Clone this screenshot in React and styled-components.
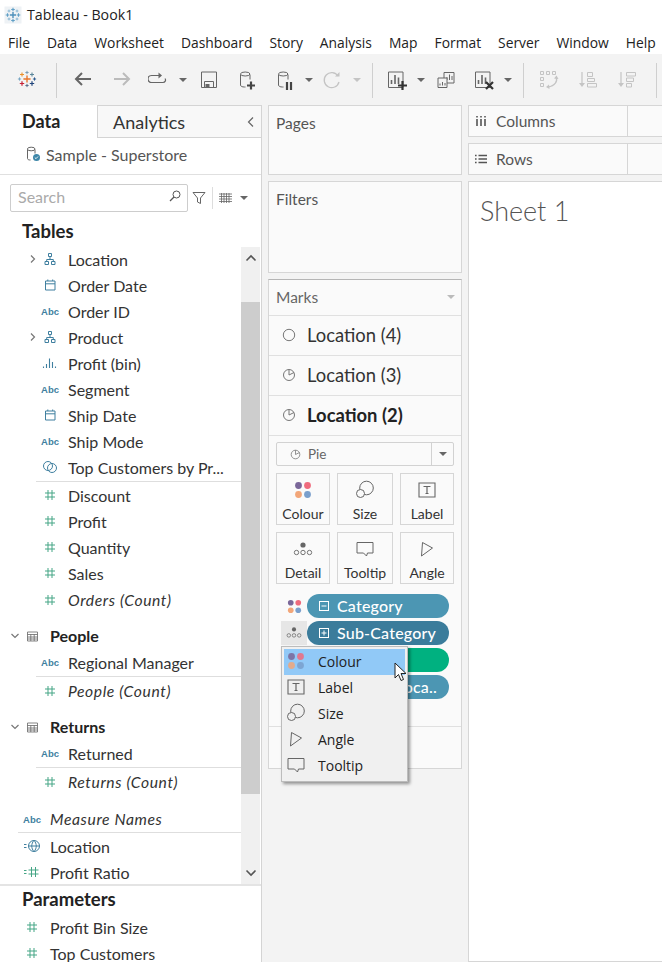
import React from "react";
import styled, { createGlobalStyle } from "styled-components";

const Global = createGlobalStyle`
    html, body {
        margin: 0;
        height: 962px;
        overflow: hidden;
        background: #fff;
    }
    * { box-sizing: border-box; }
`;

const UI = `"Open Sans", "Noto Sans", sans-serif`;
const BOOK = `"Lato", "Open Sans", sans-serif`;
const BLUE = "#3f7f9f";
const GREEN = "#45a585";

function Svg({ w = 20, h = 20, children, ...rest }) {
    return (
        <svg width={w} height={h} viewBox={`0 0 ${w} ${h}`} fill="none" style={{ display: "block", flexShrink: 0 }} {...rest}>
            {children}
        </svg>
    );
}

const Plus = ({ x, y, r, c, t = 1.4 }) => (
    <path d={`M${x - r} ${y}H${x + r}M${x} ${y - r}V${y + r}`} stroke={c} strokeWidth={t} />
);

const TitleIcon = () => (
    <Svg w={18} h={18}>
        <rect x="0.5" y="0.5" width="17" height="17" fill="#eef2f5" />
        <Plus x={9} y={9} r={3} c="#4d90bb" />
        <Plus x={9} y={3.5} r={1.8} c="#5f9fc6" t={1.1} />
        <Plus x={9} y={14.5} r={1.8} c="#5f9fc6" t={1.1} />
        <Plus x={3.5} y={9} r={1.8} c="#5f9fc6" t={1.1} />
        <Plus x={14.5} y={9} r={1.8} c="#5f9fc6" t={1.1} />
        <Plus x={5} y={5} r={1.4} c="#8ab8d4" t={1} />
        <Plus x={13} y={5} r={1.4} c="#8ab8d4" t={1} />
        <Plus x={5} y={13} r={1.4} c="#8ab8d4" t={1} />
        <Plus x={13} y={13} r={1.4} c="#8ab8d4" t={1} />
    </Svg>
);

const Logo = () => (
    <Svg>
        <Plus x={10} y={9} r={3.6} c="#e8762d" />
        <Plus x={10} y={2.5} r={1.6} c="#7b9cb5" t={1} />
        <Plus x={10} y={15.5} r={1.6} c="#5b6f8c" t={1} />
        <Plus x={2.5} y={9} r={1.6} c="#7aa7c4" t={1} />
        <Plus x={17.5} y={9} r={1.6} c="#2e5c8f" t={1} />
        <Plus x={5} y={4.5} r={2} c="#eb912b" t={1.1} />
        <Plus x={15} y={4.5} r={2} c="#5b879b" t={1.1} />
        <Plus x={5} y={13.5} r={2.2} c="#c72035" t={1.2} />
        <Plus x={15} y={13.5} r={2.2} c="#1f447b" t={1.2} />
    </Svg>
);

const ArrowLeft = ({ c = "#666" }) => (
    <Svg><path d="M18 9H3M9 3L3 9l6 6" stroke={c} strokeWidth="2" /></Svg>
);
const ArrowRight = ({ c = "#bbb" }) => (
    <Svg><path d="M2 9h15M11 3l6 6-6 6" stroke={c} strokeWidth="2" /></Svg>
);
const SwapIcon = () => (
    <Svg>
        <path d="M11 5.5H3.5a2.5 2.5 0 0 0 0 7h11.5a2.5 2.5 0 0 0 2-4" stroke="#666" strokeWidth="1.2" />
        <path d="M10.5 2.5l3.5 3-3.5 3z" fill="#666" />
    </Svg>
);
const SaveIcon = () => (
    <Svg>
        <path d="M2.5 2h15v15.5h-15z" stroke="#666" strokeWidth="1" />
        <path d="M5.5 11.5h9v6h-9z" stroke="#666" strokeWidth="1" />
        <rect x="6.5" y="14" width="4" height="3" fill="#666" />
    </Svg>
);
const Cylinder = ({ c = "#666" }) => (
    <g stroke={c} strokeWidth="1">
        <path d="M3.5 4.5v10.5c0 1.4 1.8 2 4 2h1" />
        <path d="M13 4.5v5" />
        <ellipse cx="8.2" cy="4" rx="4.7" ry="2" />
    </g>
);
const SourceAdd = () => (
    <Svg>
        <Cylinder />
        <path d="M10 15.5h8M14 11.5v8" stroke="#444" strokeWidth="2.2" />
    </Svg>
);
const SourcePause = () => (
    <Svg>
        <Cylinder />
        <path d="M12 12v8M16 12v8" stroke="#444" strokeWidth="2.2" />
    </Svg>
);
const Refresh = () => (
    <Svg>
        <path d="M16 6a7.5 7.5 0 1 0 1 6" stroke="#c4c4c4" strokeWidth="1.3" />
        <path d="M13 6.5h4.5V2z" fill="#c4c4c4" />
    </Svg>
);
const Bars = ({ c = "#666" }) => (
    <path d="M4.5 14v-4M8 14V5M11.5 14V7.5" stroke={c} strokeWidth="1.6" />
);
const ChartAdd = () => (
    <Svg>
        <path d="M1.5 2h14.5v15.5H1.5z" stroke="#666" strokeWidth="1" />
        <Bars />
        <path d="M11 15.5h9M15.5 11v9" stroke="#333" strokeWidth="2.2" />
    </Svg>
);
const ChartDup = () => (
    <Svg>
        <path d="M7 2.5h10v10.5H7z" stroke="#666" strokeWidth="1" fill="#f3f3f3" />
        <path d="M10 10V7M12.5 10V4.5M15 10V6" stroke="#666" strokeWidth="1" />
        <path d="M1 8h9v9.5H1z" stroke="#666" strokeWidth="1" fill="#f3f3f3" />
        <path d="M3 15.5v-2M5.5 15.5v-3.5M8 15.5v-2.5" stroke="#666" strokeWidth="1" />
    </Svg>
);
const ChartClear = () => (
    <Svg>
        <path d="M1.5 2h14.5v15.5H1.5z" stroke="#666" strokeWidth="1" />
        <Bars />
        <path d="M12 12l7 7M19 12l-7 7" stroke="#333" strokeWidth="2.2" />
    </Svg>
);
const SwapAxes = () => (
    <Svg>
        <g stroke="#c4c4c4" strokeWidth="1">
            <path d="M1.5 1.5h3v3h-3zM7.5 1.5h3v3h-3zM13.5 1.5h3v3h-3zM1.5 7.5h3v3h-3zM1.5 13.5h3v3h-3z" />
            <path d="M17 7c2 4-1 9-8 10" strokeWidth="1.3" />
        </g>
        <path d="M15 8.5l2.5-3 2 3.5zM10 14.5l-3 2.5 3.5 2z" fill="#c4c4c4" />
    </Svg>
);
const SortAsc = () => (
    <Svg>
        <path d="M4 2v13" stroke="#c4c4c4" strokeWidth="1.2" />
        <path d="M1 13h6l-3 4z" fill="#c4c4c4" />
        <path d="M9.5 2.5h5v4h-5zM9.5 8.5h7v3h-7zM9.5 13.5h9v3.5h-9z" stroke="#c4c4c4" strokeWidth="1" />
    </Svg>
);
const SortDesc = () => (
    <Svg>
        <path d="M4 2v13" stroke="#c4c4c4" strokeWidth="1.2" />
        <path d="M1 13h6l-3 4z" fill="#c4c4c4" />
        <path d="M9.5 2.5h9v3.5h-9zM9.5 8h7v3.5h-7zM9.5 13.5h5v3.5h-5z" stroke="#c4c4c4" strokeWidth="1" />
    </Svg>
);

const Hierarchy = () => (
    <Svg w={14} h={14}>
        <path d="M5.5 1.5h3v3h-3zM2 9.5h3.5v3H2zM8.5 9.5H12v3H8.5zM7 4.5v3M3.7 9.5v-2h6.6v2" stroke={BLUE} strokeWidth="1" />
    </Svg>
);
const CalendarIcon = () => (
    <Svg w={14} h={14}>
        <path d="M2.5 3h9.5v9H2.5zM2.5 5.8h9.5M4.8 1.5V3M9.7 1.5V3" stroke={BLUE} strokeWidth="1" />
    </Svg>
);
const BinIcon = () => (
    <Svg w={16} h={14}>
        <path d="M1.5 12v-1.5M4.5 12V8M7.5 12V2.5M10.5 12V6M13.5 12v-1.5" stroke={BLUE} strokeWidth="1.1" />
    </Svg>
);
const SetIcon = () => (
    <Svg w={16} h={14}>
        <circle cx="6" cy="6" r="4.5" stroke={BLUE} strokeWidth="1" />
        <circle cx="10" cy="8" r="4.5" stroke={BLUE} strokeWidth="1" />
    </Svg>
);
const Hash = ({ c = GREEN }) => (
    <Svg w={12} h={14}>
        <path d="M4 2v10M8 2v10M1 5h10M1 9h10" stroke={c} strokeWidth="1" />
    </Svg>
);
const GlobeIcon = () => (
    <Svg w={16} h={14}>
        <path d="M0 5.5h2.5M0 8.5h2.5" stroke={BLUE} strokeWidth="1" />
        <circle cx="10" cy="7" r="5.5" stroke={BLUE} strokeWidth="1" />
        <path d="M4.5 7h11M10 1.5c-3 3-3 8 0 11M10 1.5c3 3 3 8 0 11" stroke={BLUE} strokeWidth="1" />
    </Svg>
);
const CalcHash = () => (
    <Svg w={16} h={14}>
        <path d="M0 5.5h2.5M0 8.5h2.5" stroke={GREEN} strokeWidth="1" />
        <path d="M7.5 2v10M11.5 2v10M4.5 5h10M4.5 9h10" stroke={GREEN} strokeWidth="1" />
    </Svg>
);
const TableIcon = () => (
    <Svg w={14} h={14}>
        <path d="M2.5 3h10v9h-10zM2.5 5.5h10M2.5 8h10M2.5 10h10M5.8 5.5V12M9.2 5.5V12" stroke="#666" strokeWidth="0.8" />
    </Svg>
);
const ChevronRight = () => (
    <Svg w={8} h={10}><path d="M2 1.5L5.5 5 2 8.5" stroke="#777" strokeWidth="1.2" /></Svg>
);
const ChevronDown = () => (
    <Svg w={10} h={8}><path d="M1.5 2L5 5.5 8.5 2" stroke="#777" strokeWidth="1.2" /></Svg>
);

const Caret = ({ c = "#666" }) => (
    <Svg w={8} h={6}><path d="M0 1h8L4 5z" fill={c} /></Svg>
);

const PieMark = ({ size = 14, c = "#777" }) => (
    <Svg w={14} h={14} style={{ width: size, height: size, display: "block" }}>
        <circle cx="7" cy="7" r="5.5" stroke={c} strokeWidth="1" />
        <path d="M7 7V1.5M7 7L12 4.5" stroke={c} strokeWidth="1" />
    </Svg>
);
const CircleMark = () => (
    <Svg w={14} h={14}><circle cx="7" cy="7" r="5.7" stroke="#777" strokeWidth="1" /></Svg>
);

const ColourDots = ({ size = 18, muted }) => (
    <Svg w={18} h={18} style={{ width: size, height: size, display: "block" }}>
        <g opacity={muted ? 0.85 : 1}>
            <circle cx="4.5" cy="4.5" r="3.4" fill="#7a6799" />
            <circle cx="13.5" cy="4.5" r="3.4" fill="#ef6b7d" />
            <circle cx="4.5" cy="13.5" r="3.4" fill="#f2a679" />
            <circle cx="13.5" cy="13.5" r="3.4" fill="#7a9fcc" />
        </g>
    </Svg>
);
const SizeIcon = ({ bg = "#fafafa" }) => (
    <Svg>
        <circle cx="11.5" cy="8" r="6.8" stroke="#666" strokeWidth="1" />
        <circle cx="5.5" cy="13.5" r="4" fill={bg} stroke="#666" strokeWidth="1" />
    </Svg>
);
const LabelIcon = () => (
    <Svg w={18} h={16}>
        <path d="M1 1h16v14H1z" stroke="#666" strokeWidth="1.1" />
        <path d="M5.5 4.5h7M9 4.5v7M7.5 11.5h3" stroke="#666" strokeWidth="1.2" />
    </Svg>
);
const DetailIcon = ({ size = 20 }) => (
    <Svg w={20} h={14} style={{ width: size, height: size * 0.7, display: "block" }}>
        <circle cx="10" cy="3" r="2.6" fill="#666" />
        <circle cx="3.5" cy="10.5" r="2.2" stroke="#666" strokeWidth="0.9" />
        <circle cx="10" cy="10.5" r="2.2" stroke="#666" strokeWidth="0.9" />
        <circle cx="16.5" cy="10.5" r="2.2" stroke="#666" strokeWidth="0.9" />
    </Svg>
);
const TooltipIcon = () => (
    <Svg w={18} h={16}>
        <path d="M1 1.5h16v10.5h-5.5l-1 3-3-3H1z" stroke="#666" strokeWidth="1" strokeLinejoin="round" />
    </Svg>
);
const AngleIcon = () => (
    <Svg w={14} h={16}>
        <path d="M2.5 1.5L12.5 7 1.5 15z" stroke="#666" strokeWidth="1" strokeLinejoin="round" />
    </Svg>
);

const Page = styled.div`
    width: 662px;
    height: 962px;
    overflow: hidden;
    display: flex;
    flex-direction: column;
    font-family: ${UI};
    background: #f3f3f3;
`;

const TitleBar = styled.div`
    height: 33px;
    background: #fff;
    display: flex;
    align-items: center;
    gap: 5px;
    padding: 0 0 4px 4px;
    font-size: 14.2px;
    color: #222;
`;

const MenuBar = styled.div`
    height: 21px;
    background: #fff;
    display: flex;
    align-items: center;
    gap: 17px;
    padding: 0 0 2px 8px;
    font-size: 13.85px;
    color: #222;
    white-space: nowrap;
`;

const Toolbar = styled.div`
    height: 51px;
    flex-shrink: 0;
    display: flex;
    align-items: center;
    padding-left: 17px;
`;

const Tool = styled.div`
    margin-left: ${(p) => p.$gap || 0}px;
    flex-shrink: 0;
    display: flex;
    align-items: center;
    justify-content: center;
`;

const ToolSep = styled.div`
    margin-left: ${(p) => p.$gap}px;
    margin-top: 1px;
    width: 1px;
    height: 35px;
    flex-shrink: 0;
    background: #cfcfcf;
`;

const Body = styled.div`
    flex: 1;
    display: flex;
    min-height: 0;
`;

const DataPane = styled.aside`
    width: 262px;
    flex-shrink: 0;
    height: 100%;
    background: #fff;
    border-right: 1px solid #d4d4d4;
    display: flex;
    flex-direction: column;
    font-family: ${BOOK};
    color: #333;
`;

const Tabs = styled.div`
    height: 33px;
    flex-shrink: 0;
    display: flex;
`;

const DataTab = styled.div`
    width: 97px;
    padding: 5px 0 0 22px;
    font-size: 18px;
    font-weight: 700;
    color: #222;
`;

const AnalyticsTab = styled.div`
    flex: 1;
    display: flex;
    align-items: center;
    justify-content: space-between;
    padding: 0 5px 0 15px;
    font-size: 18px;
    color: #333;
    background: #f8f8f8;
    border: 1px solid #d4d4d4;
    border-width: 1px 0 1px 1px;
`;

const SourceRow = styled.div`
    height: 37px;
    flex-shrink: 0;
    display: flex;
    align-items: center;
    gap: 5px;
    padding: 0 0 4px 26px;
    font-size: 16px;
    color: #555;
    border-bottom: 1px solid #e0e0e0;
`;

const SearchRow = styled.div`
    margin-top: 9px;
    height: 28px;
    flex-shrink: 0;
    display: flex;
    align-items: center;
    padding-left: 10px;
`;

const SearchBox = styled.div`
    width: 178px;
    height: 28px;
    display: flex;
    align-items: center;
    justify-content: space-between;
    padding: 0 6px 4px 7px;
    border: 1px solid #cdcdcd;
    border-radius: 2px;
    font-size: 16px;
    color: #aaa;
`;

const SearchTools = styled.div`
    display: flex;
    align-items: center;
    padding-left: 4px;
`;

const VSep = styled.div`
    width: 1px;
    height: 22px;
    margin: 0 6px;
    background: #ddd;
`;

const Heading = styled.div`
    height: ${(p) => p.$height}px;
    flex-shrink: 0;
    padding-left: 22px;
    padding-top: ${(p) => p.$top || 0}px;
    padding-bottom: ${(p) => p.$bottom || 0}px;
    display: flex;
    align-items: center;
    font-size: 18.5px;
    font-weight: 700;
    color: #222;
`;

const ListArea = styled.div`
    height: 637px;
    flex-shrink: 0;
    display: flex;
    padding-right: 1px;
    overflow: hidden;
`;

const FieldList = styled.div`
    width: 241px;
    flex-shrink: 0;
`;

const Row = styled.div`
    height: ${(p) => p.$height || 26}px;
    margin-top: ${(p) => p.$top || 0}px;
    padding-left: ${(p) => (p.$deep ? 27 : 9)}px;
    padding-bottom: ${(p) => (p.$italic ? 0 : 2)}px;
    display: flex;
    align-items: center;
    font-size: ${(p) => (p.$italic ? 15.7 : 16)}px;
    font-style: ${(p) => (p.$italic ? "italic" : "normal")};
    letter-spacing: ${(p) => (p.$italic ? "0.6px" : "normal")};
    font-weight: ${(p) => (p.$bold ? 700 : 400)};
    white-space: nowrap;
    color: ${(p) => (p.$bold ? "#222" : "#333")};
`;

const ChevSlot = styled.div`
    width: 12px;
    flex-shrink: 0;
    display: flex;
    justify-content: center;
`;

const IconSlot = styled.div`
    width: 22px;
    margin-right: 7px;
    flex-shrink: 0;
    display: flex;
    align-items: center;
    justify-content: center;
`;

const AbcIcon = styled.span`
    font-family: "Liberation Sans", sans-serif;
    font-size: 9.5px;
    font-style: normal;
    font-weight: 700;
    letter-spacing: 0;
    color: ${BLUE};
`;

const Rule = styled.div`
    height: 1px;
    margin: 0 0 1px ${(p) => (p.$deep ? 36 : 18)}px;
    background: #dedede;
`;

const ScrollBar = styled.div`
    width: 19px;
    flex-shrink: 0;
    background: #f0f0f0;
    display: flex;
    flex-direction: column;
    align-items: center;
`;

const ScrollButton = styled.div`
    height: 55px;
    padding-top: 7px;
    flex-shrink: 0;
`;

const ScrollThumb = styled.div`
    width: 100%;
    height: 492px;
    flex-shrink: 0;
    background: #cdcdcd;
`;

const ScrollBottom = styled.div`
    flex: 1;
    display: flex;
    align-items: flex-end;
    padding-bottom: 7px;
`;

const ParamPane = styled.div`
    flex: 1;
    border-top: 2px solid #e4e4e4;
    overflow: hidden;
`;

const Middle = styled.div`
    width: 194px;
    margin-left: 6px;
    flex-shrink: 0;
    display: flex;
    flex-direction: column;
    font-family: ${BOOK};
`;

const Shelf = styled.section`
    height: ${(p) => p.$height}px;
    flex-shrink: 0;
    margin-bottom: 6px;
    padding: 8px 7px;
    background: #fafafa;
    border: 1px solid #d6d6d6;
    font-size: 15.5px;
    color: #555;
`;

const MarksCard = styled.section`
    height: 490px;
    flex-shrink: 0;
    background: #fafafa;
    border: 1px solid #d6d6d6;
    border-top-color: #b5b5b5;
`;

const MarksHead = styled.div`
    height: 36px;
    display: flex;
    align-items: center;
    justify-content: space-between;
    padding: 0 6px 2px 7px;
    font-size: 15.5px;
    color: #666;
    border-bottom: 1px solid #e0e0e0;
`;

const LayerRow = styled.div`
    height: 40px;
    display: flex;
    align-items: center;
    gap: 11px;
    padding: 0 0 2px 13px;
    font-size: 18.4px;
    font-weight: ${(p) => (p.$bold ? 700 : 400)};
    color: ${(p) => (p.$bold ? "#222" : "#333")};
    border-bottom: 1px solid #e0e0e0;
`;

const MarksBody = styled.div`
    padding: 6px 7px 0;
    height: 291px;
    border-bottom: 1px solid #e0e0e0;
`;

const MarkSelect = styled.div`
    height: 24px;
    display: flex;
    align-items: center;
    border: 1px solid #d2d2d2;
    border-radius: 2px;
    padding-left: 13px;
    gap: 7px;
    font-size: 13.5px;
    color: #666;
`;

const SelectArrow = styled.div`
    margin-left: auto;
    width: 22px;
    height: 100%;
    display: flex;
    align-items: center;
    justify-content: center;
    border-left: 1px solid #d2d2d2;
`;

const MarkGrid = styled.div`
    margin-top: 7px;
    display: grid;
    grid-template-columns: 54px 56px 54px;
    grid-auto-rows: 52px;
    gap: 7px;
`;

const MarkButton = styled.div`
    border: 1px solid #d6d6d6;
    display: flex;
    flex-direction: column;
    align-items: center;
    font-size: 14px;
    color: #333;
`;

const MarkIcon = styled.div`
    height: 31px;
    display: flex;
    align-items: center;
    justify-content: center;
`;

const PillList = styled.div`
    position: relative;
    margin: 10px 5px 0;
    display: flex;
    flex-direction: column;
    gap: 3px;
`;

const PillRow = styled.div`
    display: flex;
    align-items: center;
    height: 24px;
`;

const PillIcon = styled.div`
    width: 26px;
    height: 24px;
    flex-shrink: 0;
    display: flex;
    align-items: center;
    justify-content: center;
    background: ${(p) => (p.$active ? "#e6e6e6" : "transparent")};
`;

const Pill = styled.div`
    flex: 1;
    height: 24px;
    border-radius: 12px;
    display: flex;
    align-items: center;
    justify-content: ${(p) => (p.$end ? "flex-end" : "flex-start")};
    gap: 7px;
    padding: 0 12px 1px;
    font-size: 16px;
    font-weight: 500;
    letter-spacing: 0.2px;
    color: #fff;
    white-space: nowrap;
    overflow: hidden;
    background: ${(p) => p.$bg};
`;

const PlusBox = styled.span`
    width: 10px;
    height: 10px;
    flex-shrink: 0;
    margin-right: 1px;
    display: flex;
    border: 1px solid #fff;
`;

const ContextMenu = styled.div`
    position: absolute;
    left: 0;
    top: 52px;
    width: 127px;
    padding: 2px;
    background: #f0f0f0;
    border: 1px solid #bcbcbc;
    box-shadow: 2px 2px 3px rgba(0, 0, 0, 0.4);
    font-family: ${UI};
`;

const MenuItem = styled.div`
    height: 26px;
    display: flex;
    align-items: center;
    padding: 0 0 2px 3px;
    font-size: 14px;
    color: #222;
    background: ${(p) => (p.$active ? "#91c9f7" : "transparent")};
`;

const MenuIcon = styled.div`
    width: 18px;
    margin-right: 13px;
    flex-shrink: 0;
    display: flex;
    justify-content: center;
`;

const Cursor = styled.svg`
    position: absolute;
    left: 112px;
    top: 15px;
`;

const Canvas = styled.main`
    flex: 1;
    min-width: 0;
    margin-left: 6px;
    display: flex;
    flex-direction: column;
    font-family: ${BOOK};
`;

const RowShelf = styled.div`
    height: 32px;
    margin-bottom: 6px;
    flex-shrink: 0;
    display: flex;
    background: #fafafa;
    border: 1px solid #d6d6d6;
    border-right: none;
`;

const ShelfLabel = styled.div`
    width: 159px;
    display: flex;
    align-items: center;
    gap: 9px;
    padding-left: 6px;
    font-size: 15.5px;
    color: #555;
    border-right: 1px solid #d6d6d6;
`;

const Sheet = styled.div`
    flex: 1;
    background: #fff;
    border: 1px solid #d6d6d6;
    border-right: none;
    padding: 12px 11px;
    font-size: 27px;
    font-weight: 300;
    color: #555;
`;

const tableFields = [
    { icon: <Hierarchy />, name: "Location", expand: true },
    { icon: <CalendarIcon />, name: "Order Date" },
    { icon: <AbcIcon>Abc</AbcIcon>, name: "Order ID" },
    { icon: <Hierarchy />, name: "Product", expand: true },
    { icon: <BinIcon />, name: "Profit (bin)" },
    { icon: <AbcIcon>Abc</AbcIcon>, name: "Segment" },
    { icon: <CalendarIcon />, name: "Ship Date" },
    { icon: <AbcIcon>Abc</AbcIcon>, name: "Ship Mode" },
    { icon: <SetIcon />, name: "Top Customers by Pr..." },
];

const tableMeasures = ["Discount", "Profit", "Quantity", "Sales"];

function Field({ icon, name, expand, deep = true, italic }) {
    return (
        <Row $deep={deep} $italic={italic}>
            <ChevSlot>{expand && <ChevronRight />}</ChevSlot>
            <IconSlot>{icon}</IconSlot>
            {name}
        </Row>
    );
}

function TableHead({ name }) {
    return (
        <Row $bold $height={27} $top={10}>
            <ChevSlot><ChevronDown /></ChevSlot>
            <IconSlot><TableIcon /></IconSlot>
            {name}
        </Row>
    );
}

const menuItems = [
    { icon: <ColourDots muted />, name: "Colour", active: true },
    { icon: <LabelIcon />, name: "Label" },
    { icon: <SizeIcon bg="#f0f0f0" />, name: "Size" },
    { icon: <AngleIcon />, name: "Angle" },
    { icon: <TooltipIcon />, name: "Tooltip" },
];

const markButtons = [
    { icon: <ColourDots />, name: "Colour" },
    { icon: <SizeIcon />, name: "Size" },
    { icon: <LabelIcon />, name: "Label" },
    { icon: <DetailIcon />, name: "Detail" },
    { icon: <TooltipIcon />, name: "Tooltip" },
    { icon: <AngleIcon />, name: "Angle" },
];

export default function App() {
    return (
        <Page>
            <Global />
            <TitleBar><TitleIcon />Tableau - Book1</TitleBar>
            <MenuBar>
                {["File", "Data", "Worksheet", "Dashboard", "Story", "Analysis", "Map", "Format", "Server", "Window", "Help"].map((m) => (
                    <span key={m}>{m}</span>
                ))}
            </MenuBar>
            <Toolbar>
                <Tool><Logo /></Tool>
                <ToolSep $gap={19} />
                <Tool $gap={16}><ArrowLeft /></Tool>
                <Tool $gap={19}><ArrowRight /></Tool>
                <Tool $gap={16}><SwapIcon /></Tool>
                <Tool $gap={11}><Caret /></Tool>
                <Tool $gap={12}><SaveIcon /></Tool>
                <Tool $gap={18}><SourceAdd /></Tool>
                <Tool $gap={18}><SourcePause /></Tool>
                <Tool $gap={10}><Caret /></Tool>
                <Tool $gap={9}><Refresh /></Tool>
                <Tool $gap={11}><Caret c="#c4c4c4" /></Tool>
                <ToolSep $gap={11} />
                <Tool $gap={14}><ChartAdd /></Tool>
                <Tool $gap={10}><Caret /></Tool>
                <Tool $gap={12}><ChartDup /></Tool>
                <Tool $gap={17}><ChartClear /></Tool>
                <Tool $gap={10}><Caret /></Tool>
                <ToolSep $gap={11} />
                <Tool $gap={15}><SwapAxes /></Tool>
                <Tool $gap={19}><SortAsc /></Tool>
                <Tool $gap={19}><SortDesc /></Tool>
                <ToolSep $gap={19} />
            </Toolbar>
            <Body>
                <DataPane>
                    <Tabs>
                        <DataTab>Data</DataTab>
                        <AnalyticsTab>
                            Analytics
                            <Svg w={10} h={12}><path d="M7 1.5L2.5 6 7 10.5" stroke="#666" strokeWidth="1.2" /></Svg>
                        </AnalyticsTab>
                    </Tabs>
                    <SourceRow>
                        <Svg w={15} h={16}>
                            <path d="M1.5 3.5v9c0 1 1.2 1.5 3 1.5M9 3.5v4" stroke="#666" strokeWidth="1" />
                            <ellipse cx="5.2" cy="3" rx="3.8" ry="1.8" stroke="#666" strokeWidth="1" />
                            <circle cx="10.5" cy="11.5" r="3.5" fill="#3d86a8" />
                            <path d="M8.8 11.5l1.2 1.2 2-2.2" stroke="#fff" strokeWidth="0.9" />
                        </Svg>
                        Sample - Superstore
                    </SourceRow>
                    <SearchRow>
                        <SearchBox>
                            Search
                            <Svg w={12} h={12}>
                                <circle cx="7.5" cy="4.5" r="3.5" stroke="#555" strokeWidth="1" />
                                <path d="M5 7l-4 4" stroke="#555" strokeWidth="1.2" />
                            </Svg>
                        </SearchBox>
                        <SearchTools>
                            <Svg w={14} h={14}><path d="M1 1.5h12L8.5 7v5.5l-3-1.5V7z" stroke="#666" strokeWidth="1" /></Svg>
                            <VSep />
                            <Svg w={13} h={10}><path d="M0 1h13M0 3.5h13M0 6h13M0 8.5h13M2.5 0v10M5 0v10M7.5 0v10M10 0v10" stroke="#666" strokeWidth="0.8" /></Svg>
                            <Tool $gap={8}><Caret /></Tool>
                        </SearchTools>
                    </SearchRow>
                    <Heading $height={35} $top={2}>Tables</Heading>
                    <ListArea>
                        <FieldList>
                            {tableFields.map((f) => <Field key={f.name} {...f} />)}
                            <Rule $deep />
                            {tableMeasures.map((m) => <Field key={m} icon={<Hash />} name={m} />)}
                            <Field icon={<Hash />} name="Orders (Count)" italic />
                            <TableHead name="People" />
                            <Field icon={<AbcIcon>Abc</AbcIcon>} name="Regional Manager" />
                            <Rule $deep />
                            <Field icon={<Hash />} name="People (Count)" italic />
                            <TableHead name="Returns" />
                            <Field icon={<AbcIcon>Abc</AbcIcon>} name="Returned" />
                            <Rule $deep />
                            <Field icon={<Hash />} name="Returns (Count)" italic />
                            <Row $top={11} $italic>
                                <ChevSlot />
                                <IconSlot><AbcIcon>Abc</AbcIcon></IconSlot>
                                Measure Names
                            </Row>
                            <Rule />
                            <Field deep={false} icon={<GlobeIcon />} name="Location" />
                            <Field deep={false} icon={<CalcHash />} name="Profit Ratio" />
                        </FieldList>
                        <ScrollBar>
                            <ScrollButton>
                                <Svg w={12} h={8}><path d="M1.5 6.5L6 2l4.5 4.5" stroke="#555" strokeWidth="1.6" /></Svg>
                            </ScrollButton>
                            <ScrollThumb />
                            <ScrollBottom>
                                <Svg w={12} h={8}><path d="M1.5 1.5L6 6l4.5-4.5" stroke="#555" strokeWidth="1.6" /></Svg>
                            </ScrollBottom>
                        </ScrollBar>
                    </ListArea>
                    <ParamPane>
                        <Heading $height={29} $bottom={3}>Parameters</Heading>
                        <Field deep={false} icon={<Hash />} name="Profit Bin Size" />
                        <Field deep={false} icon={<Hash />} name="Top Customers" />
                    </ParamPane>
                </DataPane>
                <Middle>
                    <Shelf $height={70}>Pages</Shelf>
                    <Shelf $height={92}>Filters</Shelf>
                    <MarksCard>
                        <MarksHead>
                            Marks
                            <Caret c="#bbb" />
                        </MarksHead>
                        <LayerRow><CircleMark />Location (4)</LayerRow>
                        <LayerRow><PieMark />Location (3)</LayerRow>
                        <LayerRow $bold><PieMark />Location (2)</LayerRow>
                        <MarksBody>
                            <MarkSelect>
                                <PieMark size={11} />
                                Pie
                                <SelectArrow><Caret /></SelectArrow>
                            </MarkSelect>
                            <MarkGrid>
                                {markButtons.map((b) => (
                                    <MarkButton key={b.name}>
                                        <MarkIcon>{b.icon}</MarkIcon>
                                        {b.name}
                                    </MarkButton>
                                ))}
                            </MarkGrid>
                            <PillList>
                                <PillRow>
                                    <PillIcon><ColourDots size={15} /></PillIcon>
                                    <Pill $bg="#4c96b3">
                                        <PlusBox><Svg w={8} h={8}><path d="M1.5 4h5" stroke="#fff" /></Svg></PlusBox>
                                        Category
                                    </Pill>
                                </PillRow>
                                <PillRow>
                                    <PillIcon $active><DetailIcon size={16} /></PillIcon>
                                    <Pill $bg="#3b7c9b">
                                        <PlusBox><Svg w={8} h={8}><path d="M1.5 4h5M4 1.5v5" stroke="#fff" /></Svg></PlusBox>
                                        Sub-Category
                                    </Pill>
                                </PillRow>
                                <PillRow>
                                    <PillIcon />
                                    <Pill $bg="#00b180" />
                                </PillRow>
                                <PillRow>
                                    <PillIcon />
                                    <Pill $bg="#4c96b3" $end>Loca..</Pill>
                                </PillRow>
                                <ContextMenu>
                                    {menuItems.map((m) => (
                                        <MenuItem key={m.name} $active={m.active}>
                                            <MenuIcon>{m.icon}</MenuIcon>
                                            {m.name}
                                        </MenuItem>
                                    ))}
                                    <Cursor width="13" height="21" viewBox="0 0 13 21">
                                        <path d="M1 1v15l3.5-3.5 2.5 6 2.5-1-2.5-6H12z" fill="#fff" stroke="#222" strokeWidth="1" strokeLinejoin="round" />
                                    </Cursor>
                                </ContextMenu>
                            </PillList>
                        </MarksBody>
                    </MarksCard>
                </Middle>
                <Canvas>
                    <RowShelf>
                        <ShelfLabel>
                            <Svg w={12} h={12}><path d="M2 4v7M6 4v7M10 4v7M2 1v1.4M6 1v1.4M10 1v1.4" stroke="#555" strokeWidth="1.6" /></Svg>
                            Columns
                        </ShelfLabel>
                    </RowShelf>
                    <RowShelf>
                        <ShelfLabel>
                            <Svg w={12} h={12}><path d="M0 2.5h1.6M0 6h1.6M0 9.5h1.6M3.5 2.5H12M3.5 6H12M3.5 9.5H12" stroke="#555" strokeWidth="1.4" /></Svg>
                            Rows
                        </ShelfLabel>
                    </RowShelf>
                    <Sheet>Sheet 1</Sheet>
                </Canvas>
            </Body>
        </Page>
    );
}
